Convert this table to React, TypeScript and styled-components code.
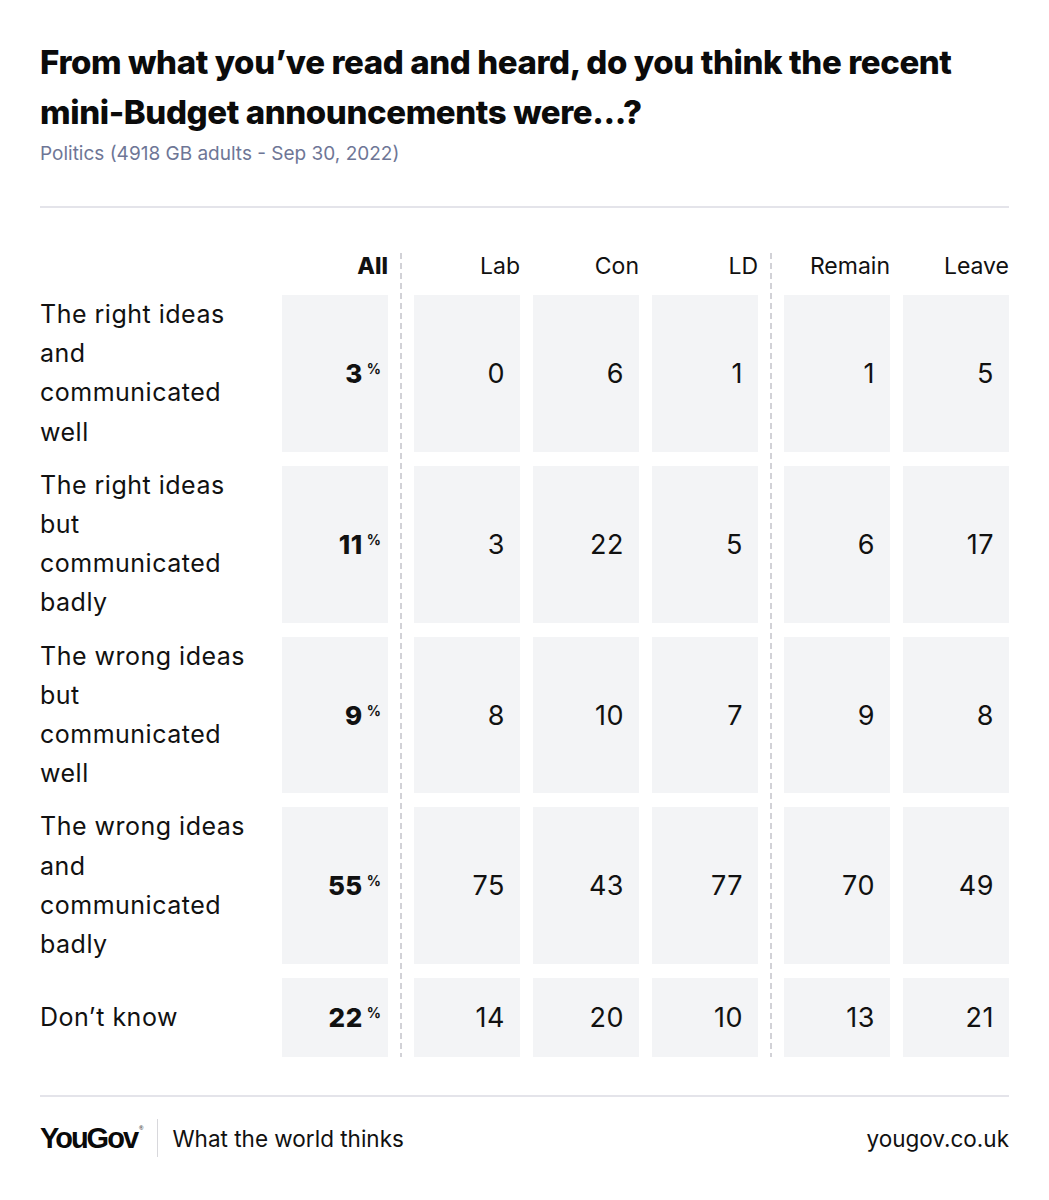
import React from 'react';
import styled, { createGlobalStyle } from 'styled-components';

const GlobalStyle = createGlobalStyle`
  body {
    margin: 0;
    background: #ffffff;
    color: #111111;
    font-family: Inter, "Noto Sans", sans-serif;
  }
`;

const Page = styled.div`
  width: 1049px;
  box-sizing: border-box;
  padding: 37px 40px 0 40px;
`;

const Title = styled.h1`
  margin: 0;
  font-size: 33px;
  line-height: 50px;
  font-weight: 800;
  letter-spacing: -0.4px;
  color: #0b0b0b;
`;

const Subtitle = styled.div`
  margin-top: 4px;
  font-size: 19px;
  line-height: 26px;
  color: #6e7696;
`;

const Rule = styled.hr<{ $gap: number }>`
  border: none;
  border-top: 2px solid #e4e4ea;
  margin: ${(p) => p.$gap}px 0 0 0;
`;

const Table = styled.div`
  display: grid;
  grid-template-columns: 229px 106px 0 106px 106px 106px 0 106px 106px;
  column-gap: 13px;
  row-gap: 14px;
  margin-top: 43px;
`;

const Separator = styled.div<{ $col: number }>`
  grid-column: ${(p) => p.$col};
  grid-row: 1 / span 6;
  width: 2px;
  margin-left: -1px;
  margin-top: 2px;
  background: repeating-linear-gradient(
    to bottom,
    #d2d2d7 0,
    #d2d2d7 6px,
    transparent 6px,
    transparent 10px
  );
`;

const HeaderCell = styled.div<{ $bold?: boolean }>`
  height: 30px;
  display: flex;
  align-items: center;
  justify-content: flex-end;
  font-size: 23px;
  font-weight: ${(p) => (p.$bold ? 800 : 400)};
  color: #111;
`;

const Blank = styled.div``;

const Label = styled.div`
  align-self: center;
  max-width: 210px;
  font-size: 25px;
  line-height: 39.2px;
  letter-spacing: 0.5px;
  color: #111;
`;

const Cell = styled.div<{ $main?: boolean }>`
  min-height: 79px;
  background: #f3f4f6;
  display: flex;
  align-items: center;
  justify-content: flex-end;
  padding-right: ${(p) => (p.$main ? 7 : 15)}px;
  font-size: 27px;
  letter-spacing: 0.5px;
  color: #111;
`;

const MainValue = styled.span`
  font-weight: 800;
  font-size: 26px;
  letter-spacing: 0.5px;
`;

const Pct = styled.span`
  font-size: 14px;
  font-weight: 700;
  letter-spacing: 0;
  margin-left: 4px;
  align-self: center;
  transform: translateY(-5px);
`;

const Footer = styled.div`
  display: flex;
  align-items: center;
  margin-top: 22px;
  height: 38px;
`;

const Logo = styled.div`
  font-family: "Liberation Sans", Arial, sans-serif;
  font-weight: 700;
  font-size: 29px;
  letter-spacing: -2px;
  color: #0a0a0a;
  display: flex;
  align-items: flex-start;
`;

const Reg = styled.span`
  font-size: 6px;
  letter-spacing: 0;
  margin-left: 2px;
  margin-top: 3px;
  color: #555;
`;

const Divider = styled.div`
  width: 1px;
  height: 38px;
  background: #d8d8dc;
  margin: 0 14px 0 14px;
`;

const Tagline = styled.div`
  font-size: 22.5px;
  color: #111;
`;

const Site = styled.div`
  margin-left: auto;
  font-size: 22.5px;
  color: #111;
`;

const headers = ['Lab', 'Con', 'LD', 'Remain', 'Leave'];

const rows: { label: string; all: number; values: number[] }[] = [
  { label: 'The right ideas and communicated well', all: 3, values: [0, 6, 1, 1, 5] },
  { label: 'The right ideas but communicated badly', all: 11, values: [3, 22, 5, 6, 17] },
  { label: 'The wrong ideas but communicated well', all: 9, values: [8, 10, 7, 9, 8] },
  { label: 'The wrong ideas and communicated badly', all: 55, values: [75, 43, 77, 70, 49] },
  { label: 'Don\u2019t know', all: 22, values: [14, 20, 10, 13, 21] },
];

const App = () => {
  return (
    <>
      <GlobalStyle />
      <Page>
        <Title>
          From what you’ve read and heard, do you think the recent
          <br />
          mini-Budget announcements were...?
        </Title>
        <Subtitle>Politics (4918 GB adults - Sep 30, 2022)</Subtitle>
        <Rule $gap={39} />

        <Table>
          <Separator $col={3} />
          <Separator $col={7} />

          <Blank />
          <HeaderCell $bold>All</HeaderCell>
          {headers.map((h) => (
            <HeaderCell key={h}>{h}</HeaderCell>
          ))}

          {rows.map((row) => (
            <React.Fragment key={row.label}>
              <Label>{row.label}</Label>
              <Cell $main>
                <MainValue>{row.all}</MainValue>
                <Pct>%</Pct>
              </Cell>
              {row.values.map((v, i) => (
                <Cell key={i}>{v}</Cell>
              ))}
            </React.Fragment>
          ))}
        </Table>

        <Rule $gap={38} />
        <Footer>
          <Logo>
            YouGov<Reg>®</Reg>
          </Logo>
          <Divider />
          <Tagline>What the world thinks</Tagline>
          <Site>yougov.co.uk</Site>
        </Footer>
      </Page>
    </>
  );
};

export default App;
